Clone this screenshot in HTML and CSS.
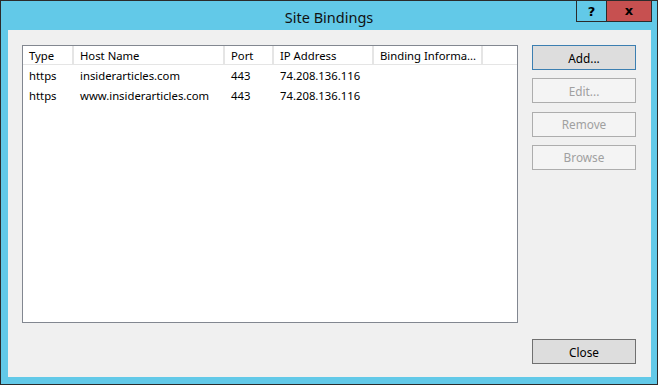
FILE: index.html
```html
<!DOCTYPE html>
<html lang="en">
  <head>
    <meta charset="UTF-8" />
    <title>Site Bindings</title>
    <link rel="stylesheet" href="styles.css">
  </head>
  <body>
    <div class="window">
      <div class="titlebar">
        <span class="title">Site Bindings</span>
        <div class="caption-btns">
          <div class="cap-btn help">?</div>
          <div class="cap-btn close">x</div>
        </div>
      </div>

      <div class="client">
        <div class="list-box">
          <div class="list-row list-header">
            <div class="cell">Type</div>
            <div class="cell">Host Name</div>
            <div class="cell">Port</div>
            <div class="cell">IP Address</div>
            <div class="cell">Binding Informa...</div>
          </div>
          <div class="list-row">
            <div class="cell">https</div>
            <div class="cell">insiderarticles.com</div>
            <div class="cell">443</div>
            <div class="cell">74.208.136.116</div>
            <div class="cell"></div>
          </div>
          <div class="list-row">
            <div class="cell">https</div>
            <div class="cell">www.insiderarticles.com</div>
            <div class="cell">443</div>
            <div class="cell">74.208.136.116</div>
            <div class="cell"></div>
          </div>
        </div>

        <div class="side">
          <div class="btn-group">
            <button class="btn default">Add...</button>
            <button class="btn" disabled>Edit...</button>
            <button class="btn" disabled>Remove</button>
            <button class="btn" disabled>Browse</button>
          </div>
          <button class="btn">Close</button>
        </div>
      </div>
    </div>
  </body>
</html>
```

FILE: styles.css
```css
* {
  margin: 0;
  padding: 0;
  box-sizing: border-box;
}

body {
  font-family: "Noto Sans", "Open Sans", sans-serif;
  font-size: 11.3px;
  color: #000;
  background-color: #fff;
}

.window {
  width: 658px;
  height: 385px;
  border: 1px solid #2b2b2b;
  background-color: #62c9e8; /* Windows frame cyan */
  display: flex;
  flex-direction: column;
}

.titlebar {
  position: relative;
  height: 29px;
  display: flex;
  justify-content: center;
  align-items: center;
}

.title {
  font-size: 14.5px;
  color: #111;
  padding-top: 2px;
}

.caption-btns {
  position: absolute;
  top: -1px;
  right: 5px;
  display: flex;
}

.cap-btn {
  height: 22px;
  border: 1px solid #2b2b2b;
  display: flex;
  justify-content: center;
  align-items: center;
  font-family: "DejaVu Sans", sans-serif;
  font-weight: bold;
  font-size: 13px;
}

.cap-btn.help {
  width: 30px;
  border-right: none;
}

.cap-btn.close {
  width: 46px;
  background-color: #c75050;
  padding-bottom: 2px;
}

.client {
  flex: 1;
  margin: 0 6px 7px 7px;
  background-color: #f0f0f0;
  display: flex;
  gap: 14px;
  padding: 15px 15px 13px 14px;
}

.list-box {
  width: 496px;
  height: 278px;
  background-color: #fff;
  border: 1px solid #828790;
}

.list-row {
  display: grid;
  grid-template-columns: 51px 151px 49px 100px 109px;
  height: 20px;
  align-items: center;
}

.list-header {
  height: 19px;
  border-bottom: 1px solid #e5e5e5;
  align-items: stretch;
}

.cell {
  padding-left: 6px;
  white-space: nowrap;
  overflow: hidden;
}

.list-header .cell {
  border-right: 2px solid #e5e5e5;
  display: flex;
  align-items: center;
}

.side {
  flex: 1;
  display: flex;
  flex-direction: column;
  justify-content: space-between;
}

.btn-group {
  display: flex;
  flex-direction: column;
  gap: 8.3px;
}

.btn {
  width: 104px;
  height: 25px;
  font-family: inherit;
  font-size: 11.8px;
  color: #000;
  background-color: #dddddd;
  border: 1px solid #707070;
}

.btn.default {
  border-color: #3c7fb1;
}

.btn:disabled {
  color: #a0a0a0;
  background-color: #f4f4f4;
  border-color: #adadad;
}
```
